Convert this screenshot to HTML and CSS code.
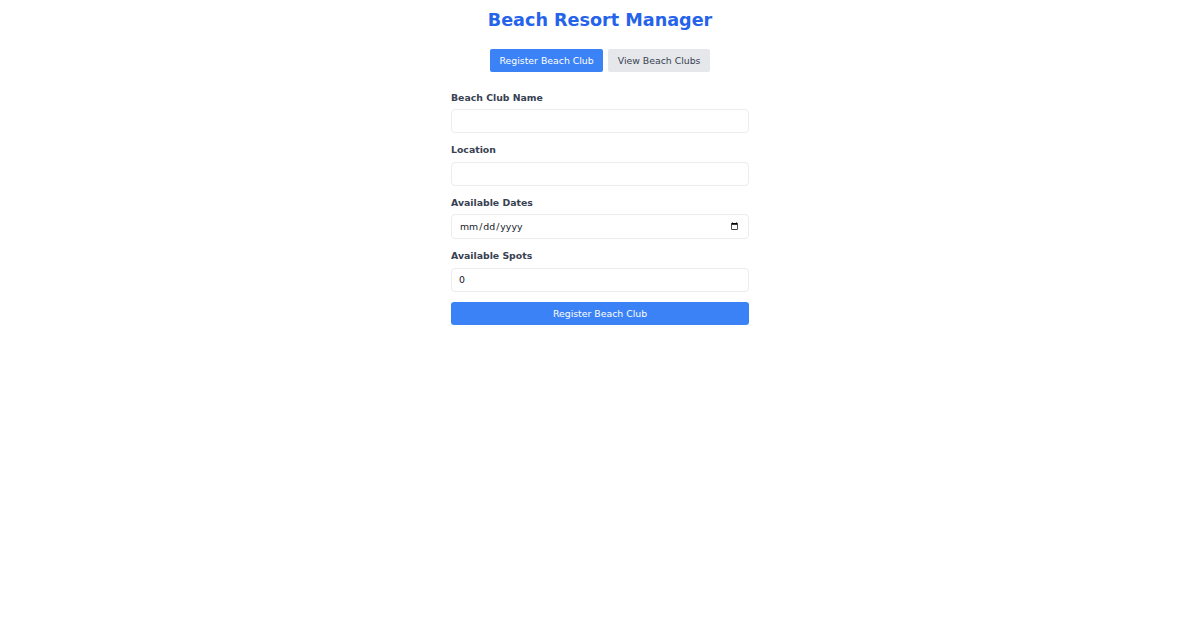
FILE: index.html
```html
<!DOCTYPE html>
<html lang="en">
<head>
  <meta charset="UTF-8">
  <title>Beach Resort Manager</title>
  <link rel="stylesheet" href="styles.css">
</head>
<body>
  <div class="app">
    <h1>Beach Resort Manager</h1>

    <div class="tabs">
      <button class="tab active">Register Beach Club</button>
      <button class="tab">View Beach Clubs</button>
    </div>

    <form class="club-form">
      <div class="field">
        <label for="name">Beach Club Name</label>
        <input id="name" type="text">
      </div>
      <div class="field">
        <label for="location">Location</label>
        <input id="location" type="text">
      </div>
      <div class="field">
        <label for="dates">Available Dates</label>
        <input id="dates" type="date">
      </div>
      <div class="field">
        <label for="spots">Available Spots</label>
        <input id="spots" type="number" value="0">
      </div>
      <button type="button" class="submit">Register Beach Club</button>
    </form>
  </div>
</body>
</html>
```

FILE: styles.css
```css
body {
  margin: 0;
  font-family: "DejaVu Sans", sans-serif;
  background: #fff;
  color: #374151;
}

.app {
  width: 298px;
  margin: 0 auto;
  padding-top: 6px;
}

h1 {
  margin: 0;
  text-align: center;
  font-size: 17.6px;
  line-height: 28px;
  color: #2563eb;
}

.tabs {
  display: flex;
  justify-content: center;
  gap: 5px;
  margin-top: 15px;
}

.tab {
  font-family: inherit;
  font-size: 9.33px;
  height: 23px;
  padding: 0 9.5px;
  border: none;
  border-radius: 2px;
  background: #e5e7eb;
  color: #374151;
}

.tab.active {
  background: #3b82f6;
  color: #fff;
}

.club-form {
  margin-top: 18.5px;
  display: flex;
  flex-direction: column;
  gap: 10px;
}

.field {
  display: flex;
  flex-direction: column;
  gap: 5.5px;
}

label {
  font-size: 9.33px;
  font-weight: bold;
  line-height: 13px;
  color: #374151;
}

input {
  box-sizing: border-box;
  height: 24px;
  padding: 0 7px;
  border: 1px solid #eaecef;
  border-radius: 4px;
  font-family: inherit;
  font-size: 9.33px;
  color: #111827;
}

input[type="date"] {
  height: 25px;
}

.submit {
  height: 23px;
  border: none;
  border-radius: 3px;
  background: #3b82f6;
  color: #fff;
  font-family: inherit;
  font-size: 9.33px;
}
```
